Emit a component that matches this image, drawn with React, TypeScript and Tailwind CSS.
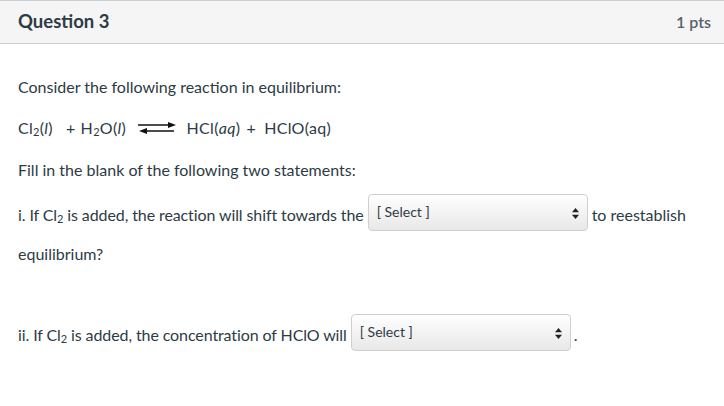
import React from 'react';

function SelectBox({ className = '' }: { className?: string }) {
  return (
    <div
      className={`relative h-[37px] w-[220px] shrink-0 rounded-[4px] border border-[#cfcfcf] bg-gradient-to-b from-[#ffffff] to-[#e8e8e8] shadow-[inset_0_1px_0_#fff] ${className}`}
    >
      <span className="absolute left-[8px] top-[8px] text-[14px] leading-[17px] text-[#2d3b45]">[ Select ]</span>
      <svg className="absolute right-[8px] top-[13px]" width="7" height="11" viewBox="0 0 7 11">
        <path d="M3.5 0 L7 4.2 L0 4.2 Z" fill="#222" />
        <path d="M3.5 11 L7 6.8 L0 6.8 Z" fill="#222" />
      </svg>
    </div>
  );
}

function Sub({ children }: { children: React.ReactNode }) {
  return <sub className="relative top-[2px] align-baseline text-[11px]">{children}</sub>;
}

export default function App() {
  return (
    <div className="h-[406px] w-[724px] bg-white font-['Lato','Noto_Sans',sans-serif] text-[#2d3b45]">
      <div className="flex h-[44px] items-center justify-between border-y border-[#c7cdd1] bg-[#f5f5f5] pl-[18px] pr-[13px]">
        <h2 className="text-[18.5px] font-bold text-[#2d3b45]">Question 3</h2>
        <span className="text-[16px] font-semibold text-[#56626b]">1 pts</span>
      </div>

      <div className="px-[18px] text-[16px]">
        <p className="mt-[32px] leading-[22px]">Consider the following reaction in equilibrium:</p>

        <div className="mt-[19px] flex h-[22px] items-center text-[16px] tracking-[0.3px]">
          <span className="inline-block w-[44px]">
            Cl<Sub>2</Sub>(<i>l</i>)
          </span>
          <span className="ml-[4px]">+</span>
          <span className="ml-[5px] inline-block w-[46px]">
            H<Sub>2</Sub>O(<i>l</i>)
          </span>
          <svg className="ml-[11px]" width="39" height="14" viewBox="0 0 39 14">
            <line x1="0" y1="4" x2="32" y2="4" stroke="#111" strokeWidth="1.5" />
            <path d="M30 1 L38 4 L30 7 Z" fill="#111" />
            <line x1="7" y1="10" x2="36" y2="10" stroke="#111" strokeWidth="1.5" />
            <path d="M9 7 L1 10 L9 13 Z" fill="#111" />
          </svg>
          <span className="ml-[10px] inline-block w-[51px]">
            HCl(<i>aq</i>)
          </span>
          <span className="ml-[9px]">+</span>
          <span className="ml-[8px]">HClO(aq)</span>
        </div>

        <p className="mt-[20px] leading-[22px]">Fill in the blank of the following two statements:</p>

        <div className="mt-[13px] flex items-center">
          <span className="relative top-[2px] tracking-[-0.1px]">
            i. If Cl<Sub>2</Sub> is added, the reaction will shift towards the
          </span>
          <SelectBox className="ml-[4px]" />
          <span className="relative top-[2px] ml-[4px]">to reestablish</span>
        </div>

        <p className="mt-[12px] leading-[22px]">equilibrium?</p>

        <div className="mt-[49px] flex items-center">
          <span className="relative top-[2px] tracking-[-0.1px]">
            ii. If Cl<Sub>2</Sub> is added, the concentration of HClO will
          </span>
          <SelectBox className="ml-[4px]" />
          <span className="relative top-[2px] ml-[3px]">.</span>
        </div>
      </div>
    </div>
  );
}
